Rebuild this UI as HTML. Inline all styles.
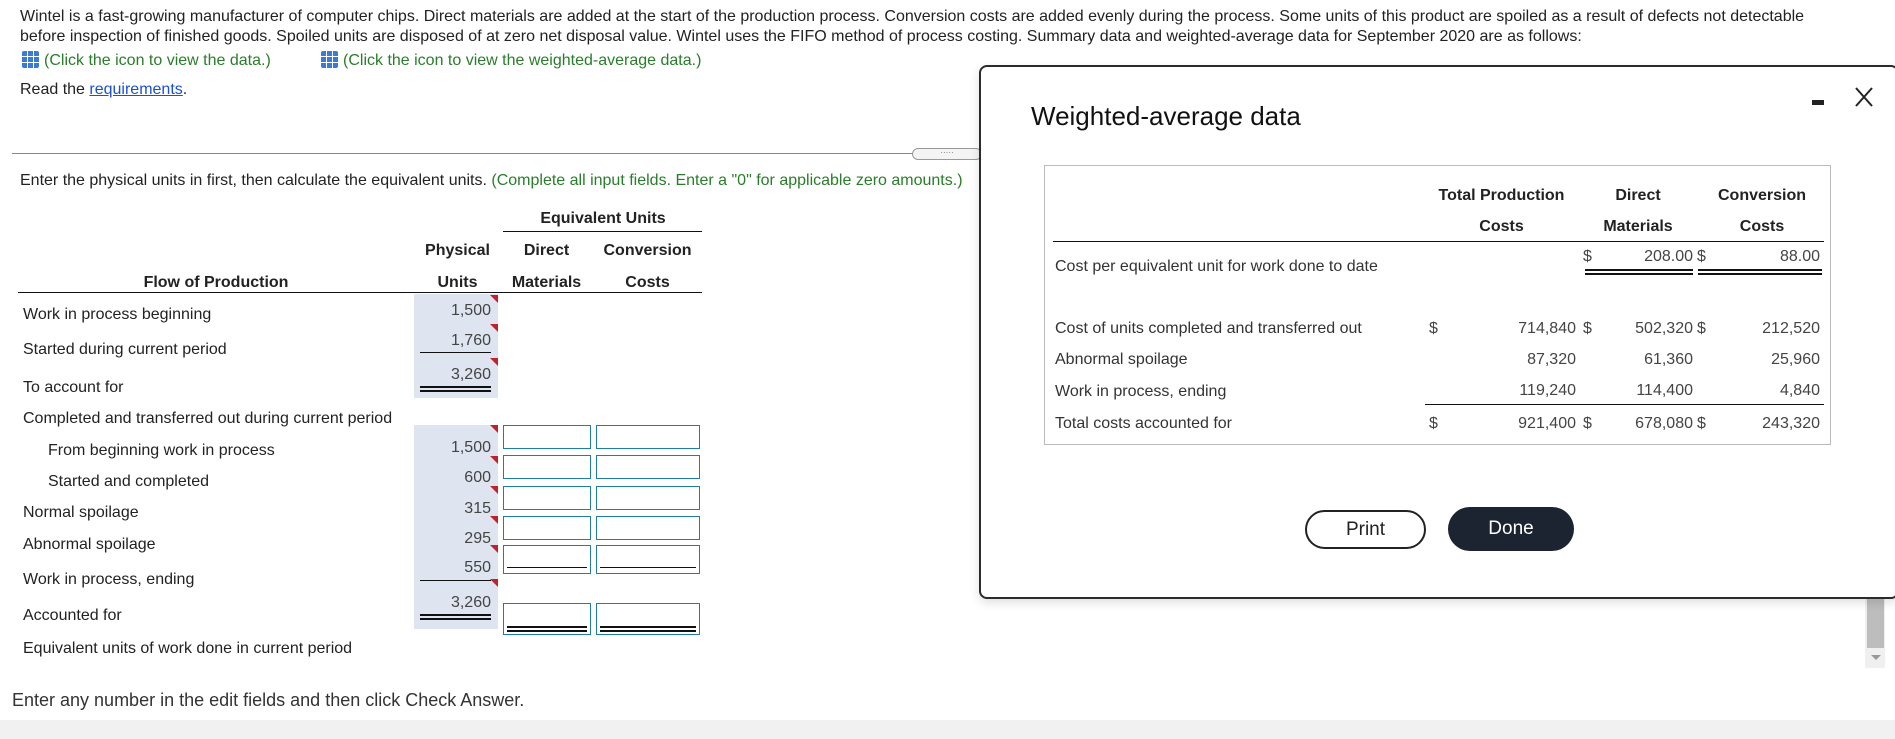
<!DOCTYPE html>
<html><head><meta charset="utf-8"><style>
*{margin:0;padding:0;box-sizing:border-box}
body{width:1895px;height:739px;position:relative;overflow:hidden;background:#fff;font-family:"Liberation Sans",Arial,sans-serif;font-size:16px;color:#222}
.a{position:absolute;white-space:nowrap}
.r{text-align:right}
.c{text-align:center}
.b{font-weight:bold}
.g{color:#2a7d2a}
.sh{position:absolute;background:#dfe5f0}
.tri{position:absolute;width:0;height:0;border-top:8px solid #c0222a;border-left:8px solid transparent}
.in{position:absolute;border:1px solid #1f7fa0;background:#fff}
.dl{position:absolute;border-top:2px solid #111;border-bottom:2px solid #111;height:6px}
.m{color:#444}
.ico{display:inline-block;width:17px;height:17px;background:#3a7bd5;border-radius:2px;vertical-align:-3px;margin-right:5px;background-image:linear-gradient(#fff 0 0),linear-gradient(#fff 0 0),linear-gradient(#fff 0 0),linear-gradient(#fff 0 0);background-size:1px 100%,1px 100%,100% 1px,100% 1px;background-position:5px 0,11px 0,0 5px,0 11px;background-repeat:no-repeat}
</style></head><body>
<div class="a" style="left:20px;top:7px;font-size:16px;line-height:20px">Wintel is a fast-growing manufacturer of computer chips. Direct materials are added at the start of the production process. Conversion costs are added evenly during the process. Some units of this product are spoiled as a result of defects not detectable<br>before inspection of finished goods. Spoiled units are disposed of at zero net disposal value. Wintel uses the FIFO method of process costing. Summary data and weighted-average data for September 2020 are as follows:</div>
<div class="a g" style="left:22px;top:51px"><span class="ico"></span>(Click the icon to view the data.)</div>
<div class="a g" style="left:321px;top:51px"><span class="ico"></span>(Click the icon to view the weighted-average data.)</div>
<div class="a" style="left:20px;top:81px">Read the <span style="color:#1a4fd6;text-decoration:underline">requirements</span>.</div>
<div class="a" style="left:12px;top:153px;width:905px;height:1px;background:#888"></div>
<div class="a" style="left:912px;top:148px;width:70px;height:12px;border:1px solid #999;border-radius:6px;background:#f4f4f4;font-size:8px;line-height:8px;text-align:center;color:#666">·····</div>
<div class="a" style="left:20px;top:172px">Enter the physical units in first, then calculate the equivalent units. <span class="g">(Complete all input fields. Enter a "0" for applicable zero amounts.)</span></div>

<div class="a b c" style="left:503px;top:210px;width:200px">Equivalent Units</div>
<div class="a" style="left:503px;top:231px;width:199px;height:1px;background:#111"></div>
<div class="a b c" style="left:415px;top:242px;width:85px">Physical</div>
<div class="a b c" style="left:503px;top:242px;width:87px">Direct</div>
<div class="a b c" style="left:596px;top:242px;width:103px">Conversion</div>
<div class="a b c" style="left:18px;top:274px;width:396px">Flow of Production</div>
<div class="a b c" style="left:415px;top:274px;width:85px">Units</div>
<div class="a b c" style="left:503px;top:274px;width:87px">Materials</div>
<div class="a b c" style="left:596px;top:274px;width:103px">Costs</div>
<div class="a" style="left:18px;top:292px;width:684px;height:1px;background:#111"></div>

<div class="sh" style="left:414px;top:294px;width:84px;height:104px"></div>
<div class="sh" style="left:414px;top:425px;width:84px;height:204px"></div>

<div class="a" style="left:23px;top:306px">Work in process beginning</div>
<div class="a" style="left:23px;top:341px">Started during current period</div>
<div class="a" style="left:23px;top:379px">To account for</div>
<div class="a" style="left:23px;top:410px">Completed and transferred out during current period</div>
<div class="a" style="left:48px;top:442px">From beginning work in process</div>
<div class="a" style="left:48px;top:473px">Started and completed</div>
<div class="a" style="left:23px;top:504px">Normal spoilage</div>
<div class="a" style="left:23px;top:536px">Abnormal spoilage</div>
<div class="a" style="left:23px;top:571px">Work in process, ending</div>
<div class="a" style="left:23px;top:607px">Accounted for</div>
<div class="a" style="left:23px;top:640px">Equivalent units of work done in current period</div>

<div class="a r m" style="left:420px;top:302px;width:71px">1,500</div>
<div class="a r m" style="left:420px;top:332px;width:71px">1,760</div>
<div class="a" style="left:420px;top:352px;width:71px;height:1px;background:#111"></div>
<div class="a r m" style="left:420px;top:366px;width:71px">3,260</div>
<div class="dl" style="left:420px;top:386px;width:71px"></div>
<div class="a r m" style="left:420px;top:439px;width:71px">1,500</div>
<div class="a r m" style="left:420px;top:469px;width:71px">600</div>
<div class="a r m" style="left:420px;top:500px;width:71px">315</div>
<div class="a r m" style="left:420px;top:530px;width:71px">295</div>
<div class="a r m" style="left:420px;top:559px;width:71px">550</div>
<div class="a" style="left:420px;top:580px;width:71px;height:1px;background:#111"></div>
<div class="a r m" style="left:420px;top:594px;width:71px">3,260</div>
<div class="dl" style="left:420px;top:614px;width:71px"></div>
<div class="tri" style="left:490px;top:295px"></div>
<div class="tri" style="left:490px;top:324px"></div>
<div class="tri" style="left:490px;top:358px"></div>
<div class="tri" style="left:490px;top:425px"></div>
<div class="tri" style="left:490px;top:456px"></div>
<div class="tri" style="left:490px;top:486px"></div>
<div class="tri" style="left:490px;top:516px"></div>
<div class="tri" style="left:490px;top:545px"></div>
<div class="tri" style="left:490px;top:579px"></div>

<div class="in" style="left:503px;top:425px;width:88px;height:24px"></div><div class="in" style="left:596px;top:425px;width:104px;height:24px"></div>
<div class="in" style="left:503px;top:455px;width:88px;height:24px"></div><div class="in" style="left:596px;top:455px;width:104px;height:24px"></div>
<div class="in" style="left:503px;top:486px;width:88px;height:24px"></div><div class="in" style="left:596px;top:486px;width:104px;height:24px"></div>
<div class="in" style="left:503px;top:516px;width:88px;height:24px"></div><div class="in" style="left:596px;top:516px;width:104px;height:24px"></div>
<div class="in" style="left:503px;top:545px;width:88px;height:29px"><div style="position:absolute;left:3px;right:3px;top:21px;height:1px;background:#111"></div></div>
<div class="in" style="left:596px;top:545px;width:104px;height:29px"><div style="position:absolute;left:3px;right:3px;top:21px;height:1px;background:#111"></div></div>
<div class="in" style="left:503px;top:603px;width:88px;height:32px"><div class="dl" style="left:3px;right:3px;top:22px"></div></div>
<div class="in" style="left:596px;top:603px;width:104px;height:32px"><div class="dl" style="left:3px;right:3px;top:22px"></div></div>

<div class="a" style="left:12px;top:690px;font-size:18px;color:#333">Enter any number in the edit fields and then click Check Answer.</div>
<div class="a" style="left:0;top:720px;width:1895px;height:19px;background:#f1f1f1"></div>

<div class="a" style="left:1865px;top:596px;width:20px;height:72px;background:#f0f0f0"></div>
<div class="a" style="left:1867px;top:596px;width:17px;height:52px;background:#bdbdbd"></div>
<div class="a" style="left:1871px;top:655px;width:0;height:0;border-left:5px solid transparent;border-right:5px solid transparent;border-top:5px solid #999"></div>

<div class="a" style="left:979px;top:65px;width:920px;height:534px;border:2px solid #2b2b2b;border-radius:8px;background:#fff;box-shadow:0 4px 10px rgba(0,0,0,.12)"></div>
<div class="a" style="left:1031px;top:101px;font-size:26px;color:#111">Weighted-average data</div>
<div class="a" style="left:1812px;top:100px;width:12px;height:5px;background:#222"></div>
<svg class="a" style="left:1853px;top:86px" width="22" height="22" viewBox="0 0 22 22"><path d="M3 2L19 20M19 2L3 20" stroke="#222" stroke-width="2"/></svg>

<div class="a" style="left:1044px;top:165px;width:787px;height:280px;border:1px solid #bbb"></div>
<div class="a b c" style="left:1420px;top:187px;width:163px">Total Production</div>
<div class="a b c" style="left:1583px;top:187px;width:110px">Direct</div>
<div class="a b c" style="left:1700px;top:187px;width:124px">Conversion</div>
<div class="a b c" style="left:1420px;top:218px;width:163px">Costs</div>
<div class="a b c" style="left:1583px;top:218px;width:110px">Materials</div>
<div class="a b c" style="left:1700px;top:218px;width:124px">Costs</div>
<div class="a" style="left:1053px;top:241px;width:771px;height:1px;background:#111"></div>

<div class="a" style="left:1055px;top:258px;color:#333">Cost per equivalent unit for work done to date</div>
<div class="a" style="left:1583px;top:248px;color:#444">$</div>
<div class="a r m" style="left:1600px;top:248px;width:93px">208.00</div>
<div class="a" style="left:1697px;top:248px;color:#444">$</div>
<div class="a r m" style="left:1720px;top:248px;width:100px">88.00</div>
<div class="dl" style="left:1585px;top:269px;width:108px;height:6px"></div>
<div class="dl" style="left:1698px;top:269px;width:124px;height:6px"></div>

<div class="a" style="left:1055px;top:320px;color:#333">Cost of units completed and transferred out</div>
<div class="a" style="left:1055px;top:351px;color:#333">Abnormal spoilage</div>
<div class="a" style="left:1055px;top:383px;color:#333">Work in process, ending</div>
<div class="a" style="left:1055px;top:415px;color:#333">Total costs accounted for</div>

<div class="a m" style="left:1429px;top:320px">$</div>
<div class="a r m" style="left:1480px;top:320px;width:96px">714,840</div>
<div class="a m" style="left:1583px;top:320px">$</div>
<div class="a r m" style="left:1600px;top:320px;width:93px">502,320</div>
<div class="a m" style="left:1697px;top:320px">$</div>
<div class="a r m" style="left:1720px;top:320px;width:100px">212,520</div>

<div class="a r m" style="left:1480px;top:351px;width:96px">87,320</div>
<div class="a r m" style="left:1600px;top:351px;width:93px">61,360</div>
<div class="a r m" style="left:1720px;top:351px;width:100px">25,960</div>

<div class="a r m" style="left:1480px;top:382px;width:96px">119,240</div>
<div class="a r m" style="left:1600px;top:382px;width:93px">114,400</div>
<div class="a r m" style="left:1720px;top:382px;width:100px">4,840</div>
<div class="a" style="left:1425px;top:404px;width:399px;height:1px;background:#111"></div>

<div class="a m" style="left:1429px;top:415px">$</div>
<div class="a r m" style="left:1480px;top:415px;width:96px">921,400</div>
<div class="a m" style="left:1583px;top:415px">$</div>
<div class="a r m" style="left:1600px;top:415px;width:93px">678,080</div>
<div class="a m" style="left:1697px;top:415px">$</div>
<div class="a r m" style="left:1720px;top:415px;width:100px">243,320</div>

<div class="a c" style="left:1305px;top:510px;width:121px;height:39px;border:2px solid #222;border-radius:20px;font-size:19px;line-height:35px;color:#222">Print</div>
<div class="a c" style="left:1448px;top:507px;width:126px;height:44px;border-radius:22px;background:#1c2331;color:#fff;font-size:19px;line-height:44px">Done</div>
</body></html>
